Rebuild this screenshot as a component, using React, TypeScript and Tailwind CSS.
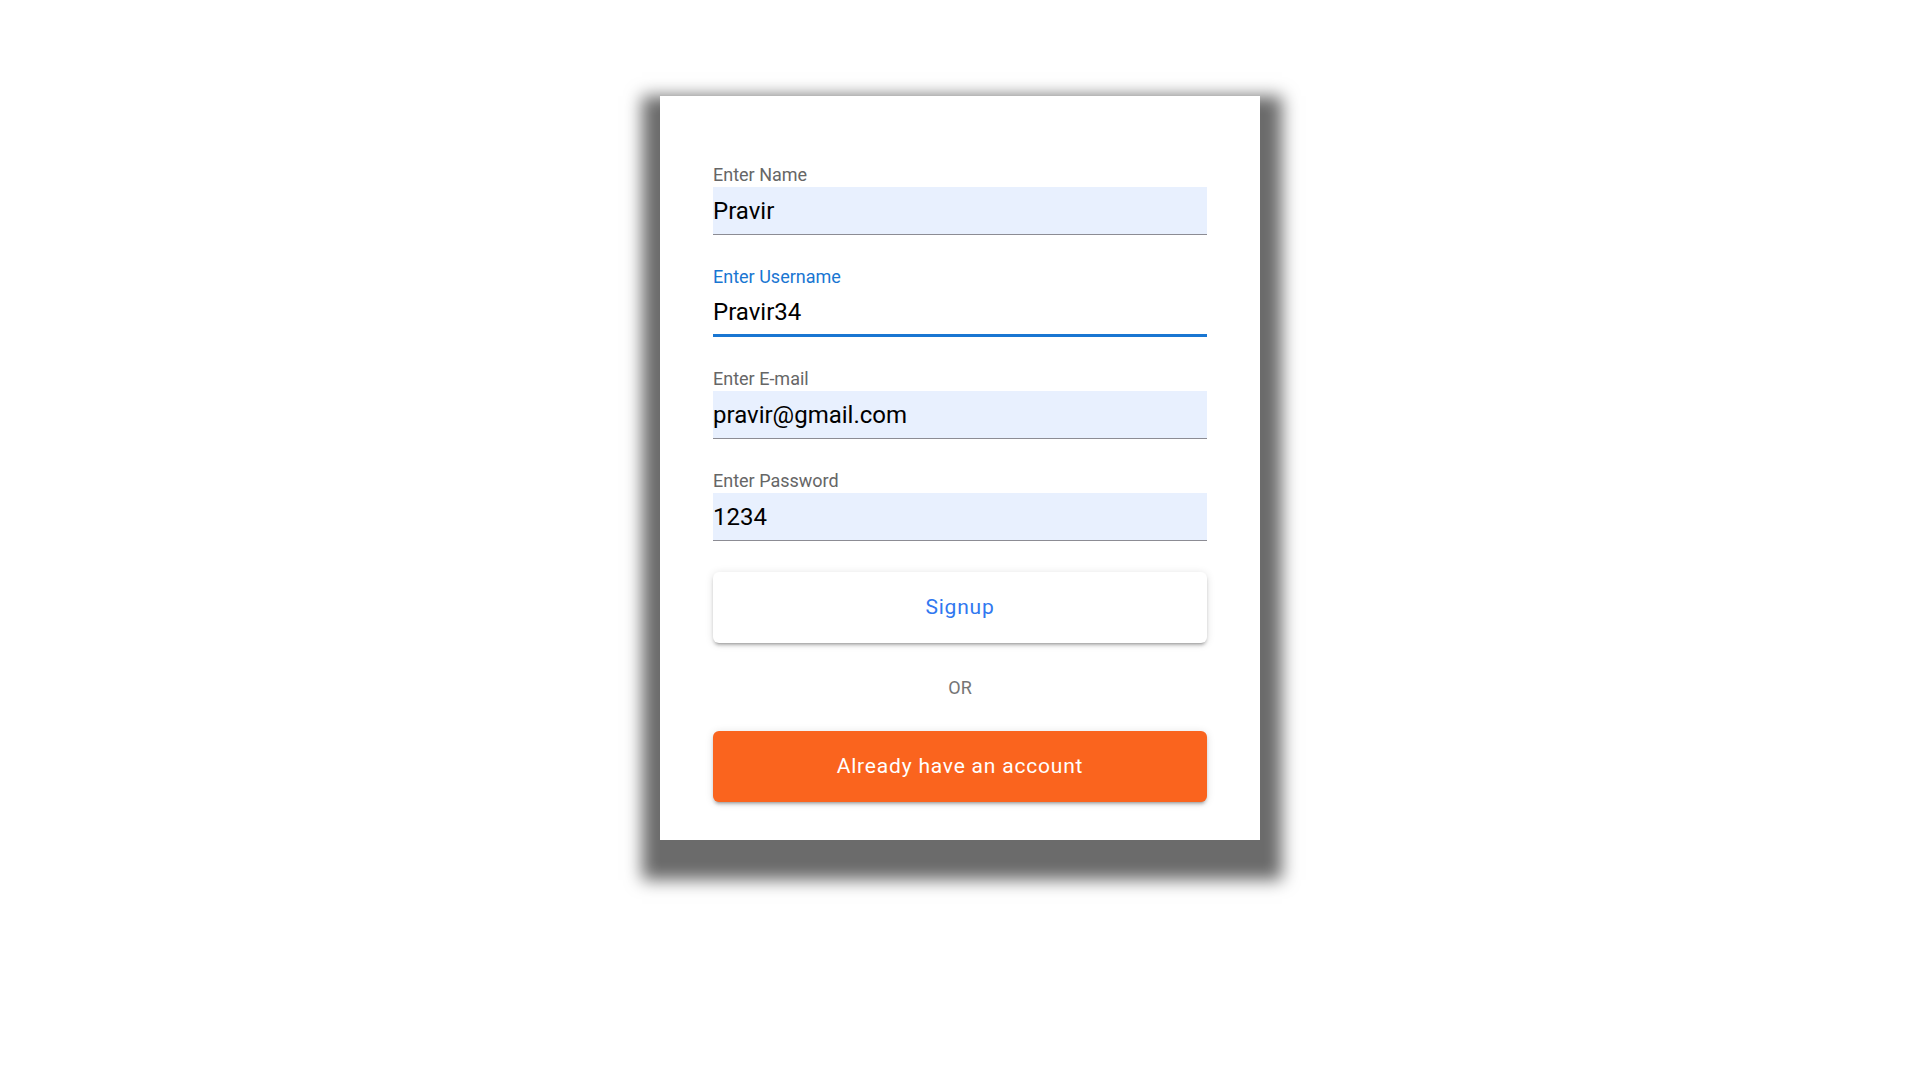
import { useState } from "react";

const fields = [
  { label: "Enter Name", value: "Pravir", autofill: true },
  { label: "Enter Username", value: "Pravir34", autofill: false },
  { label: "Enter E-mail", value: "pravir@gmail.com", autofill: true },
  { label: "Enter Password", value: "1234", autofill: true },
];

function Field({ label, value, autofill, focused }: { label: string; value: string; autofill: boolean; focused: boolean }) {
  return (
    <div className="flex flex-col">
      <label className={`h-[20px] leading-[20px] text-[18px] ${focused ? "text-[#1976d2]" : "text-[#666666]"}`}>
        {label}
      </label>
      <div
        className={`mt-[2px] h-[48px] flex items-center ${autofill ? "bg-[#e8f0fe]" : "bg-white"} ${
          focused ? "border-b-[3px] border-[#1976d2] pt-px" : "border-b-[1.5px] border-[#8c8c94]"
        }`}
      >
        <input
          readOnly
          value={value}
          className="w-full bg-transparent outline-none text-[24px] leading-[28px] text-black p-0"
        />
      </div>
    </div>
  );
}

export default function App() {
  const [focus] = useState(1);

  return (
    <div className="min-h-screen bg-white flex justify-center pt-[96px] font-[Roboto,Arial,sans-serif]">
      <div className="w-[600px] h-fit bg-white px-[53px] pt-[69px] pb-[38px] shadow-[2px_20px_16px_20px_#6b6b6b]">
        <div className="flex flex-col gap-[32px]">
          {fields.map((f, i) => (
            <Field key={f.label} {...f} focused={i === focus} />
          ))}
        </div>

        <button className="mt-[31px] w-full h-[71px] rounded-[6px] bg-white text-[#3178f0] text-[21px] font-normal tracking-[0.8px] shadow-[0_4px_2px_-3px_rgba(0,0,0,0.2),0_3px_3px_0_rgba(0,0,0,0.14),0_1px_8px_0_rgba(0,0,0,0.12)]">
          Signup
        </button>

        <div className="h-[88px] flex items-center justify-center text-[18px] text-[#757575]">OR</div>

        <button className="w-full h-[71px] rounded-[6px] bg-[#fa641e] text-white text-[21px] font-normal tracking-[0.8px] shadow-[0_4px_2px_-3px_rgba(0,0,0,0.2),0_3px_3px_0_rgba(0,0,0,0.14),0_1px_8px_0_rgba(0,0,0,0.12)]">
          Already have an account
        </button>
      </div>
    </div>
  );
}
